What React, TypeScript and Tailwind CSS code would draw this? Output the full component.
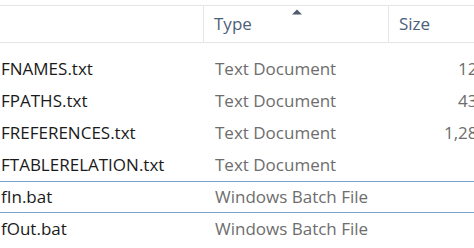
import React from 'react'

const rows = [
  { name: 'FNAMES.txt', type: 'Text Document', size: '125 KB' },
  { name: 'FPATHS.txt', type: 'Text Document', size: '437 KB' },
  { name: 'FREFERENCES.txt', type: 'Text Document', size: '1,285 KB' },
  { name: 'FTABLERELATION.txt', type: 'Text Document', size: '' },
  { name: 'fIn.bat', type: 'Windows Batch File', size: '', focused: true },
  { name: 'fOut.bat', type: 'Windows Batch File', size: '' },
]

export default function App() {
  return (
    <div
      className="w-[474px] h-[248px] overflow-hidden bg-white"
      style={{ fontFamily: '"Open Sans", "Noto Sans", sans-serif' }}
    >
      {/* Column header */}
      <div className="mt-[5px] h-[38px] border-y border-[#e5e5e5] flex text-[17px] text-[#4c607a]">
        <div className="w-[204px] shrink-0 border-r border-[#e5e5e5]" />
        <div className="relative w-[185px] shrink-0 border-r border-[#e5e5e5] flex items-center pl-[10px]">
          <svg className="absolute left-[88px] top-[3px]" width="10" height="6" viewBox="0 0 10 6">
            <path d="M0 5.5 L5 0.5 L10 5.5 Z" fill="#4f5b6e" />
          </svg>
          Type
        </div>
        <div className="flex-1 flex items-center pl-[10px]">Size</div>
      </div>

      {/* Rows */}
      <div className="pt-[10px] w-[560px]">
        {rows.map((r) => (
          <div
            key={r.name}
            className={`flex h-[32px] items-center text-[17px] ${
              r.focused ? 'border-y border-[#7da2ce]' : 'border-y border-transparent'
            }`}
          >
            <div className="w-[204px] shrink-0 pl-[1px] text-[#1a1a1a] whitespace-nowrap">{r.name}</div>
            <div className="w-[185px] shrink-0 pl-[11px] text-[#6d6d6d] whitespace-nowrap">{r.type}</div>
            <div className="w-[124px] shrink-0 text-right text-[#6d6d6d] whitespace-nowrap">{r.size}</div>
          </div>
        ))}
      </div>
    </div>
  )
}
